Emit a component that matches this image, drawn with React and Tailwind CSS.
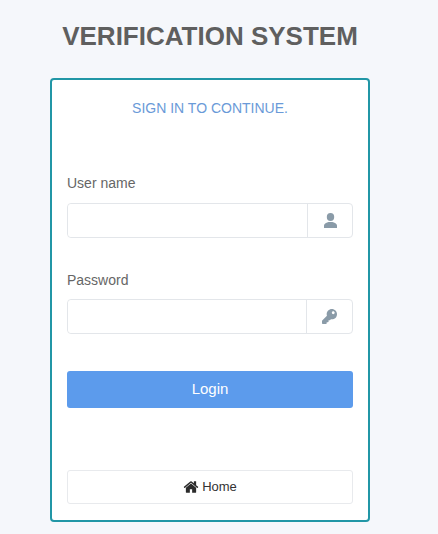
import React from 'react';
import { FaKey } from 'react-icons/fa';

function UserIcon() {
  return (
    <svg viewBox="0 0 13 15" className="w-[13px] h-[15px] fill-[#8a9ba8]">
      <ellipse cx="6.5" cy="4" rx="3.7" ry="3.9" />
      <path d="M0 15V12.6C0 10.6 2.6 9.7 4.6 9h3.8C10.4 9.7 13 10.6 13 12.6V15Z" />
    </svg>
  );
}

function HomeIcon() {
  return (
    <svg viewBox="0 0 1792 1792" className="w-[16px] h-[16px] fill-[#2b2b2b]">
      <path d="M1472 992v480q0 26-19 45t-45 19h-384v-384h-256v384h-384q-26 0-45-19t-19-45v-480q0-1 .5-3t.5-3l575-474 575 474q1 2 1 6zm223-69l-62 74q-8 9-21 11h-3q-13 0-21-7l-692-577-692 577q-12 8-24 7-13-2-21-11l-62-74q-8-10-7-23.5t11-21.5l719-599q32-26 76-26t76 26l244 204v-195q0-14 9-23t23-9h192q14 0 23 9t9 23v408l219 182q10 8 11 21.5t-7 23.5z" />
    </svg>
  );
}

export default function App() {
  return (
    <div className="min-h-screen bg-[#f5f7fb] font-['Liberation_Sans',Arial,sans-serif] overflow-hidden">
      <div className="w-[320px] ml-[50px] pt-[19px]">
        <h1 className="text-[26px] leading-[34px] font-bold text-[#5f5f5f] text-center mb-[25px]">VERIFICATION SYSTEM</h1>

        <div className="h-[444px] bg-white border-2 border-[#2196a6] rounded-[4px] px-[15px] flex flex-col">
          <p className="mt-[18px] text-sm leading-5 text-center text-[#6a9ad8]">SIGN IN TO CONTINUE.</p>

          <label className="mt-[55px] text-sm leading-5 text-[#666666]">User name</label>
          <div className="mt-[10px] h-[35px] flex border border-[#e3e6ea] rounded-[4px]">
            <input className="flex-1 min-w-0 outline-none bg-white rounded-l-[4px]" type="text" />
            <span className="w-[45px] flex items-center justify-center border-l border-[#e3e6ea]">
              <UserIcon />
            </span>
          </div>

          <label className="mt-[32px] text-sm leading-5 text-[#666666]">Password</label>
          <div className="mt-[9px] h-[35px] flex border border-[#e3e6ea] rounded-[4px]">
            <input className="flex-1 min-w-0 outline-none bg-white rounded-l-[4px]" type="password" />
            <span className="w-[46px] flex items-center justify-center border-l border-[#e3e6ea]">
              <FaKey className="w-[15px] h-[15px] text-[#8a9ba8]" />
            </span>
          </div>

          <button className="mt-[37px] h-[37px] bg-[#5c9bec] rounded-[3px] text-white text-[15px]">Login</button>

          <button className="mt-[62px] h-[34px] bg-white border border-[#e8eaed] rounded-[3px] flex items-center justify-center gap-[3px] text-[13px] text-[#333333]">
            <HomeIcon />
            Home
          </button>
        </div>
      </div>
    </div>
  );
}
